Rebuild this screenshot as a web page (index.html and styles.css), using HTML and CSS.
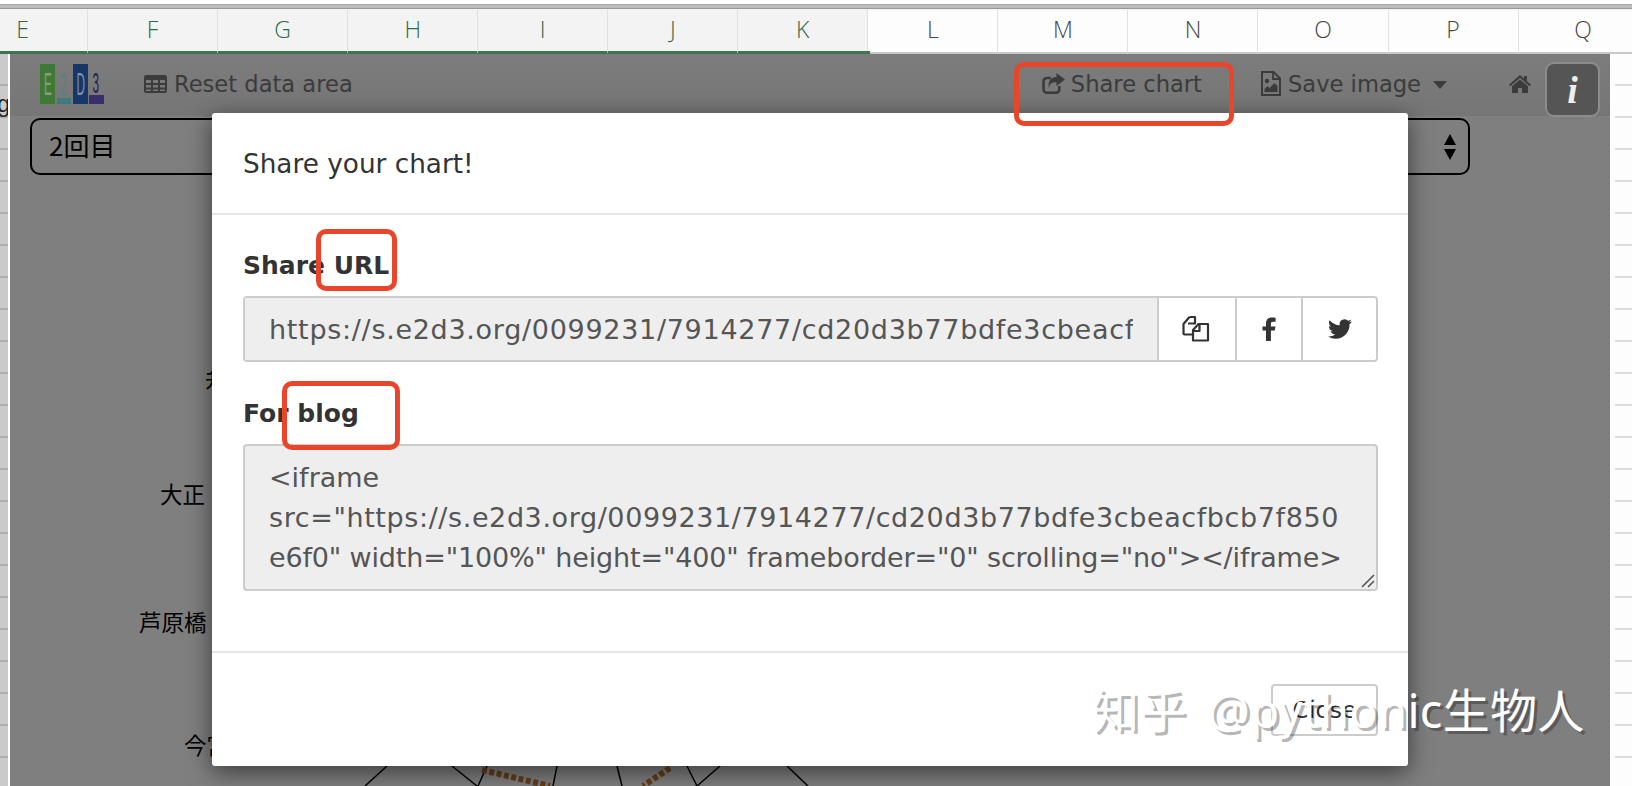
FILE: index.html
```html
<!DOCTYPE html>
<html lang="ja">
<head>
<meta charset="utf-8">
<title>E2D3 Share chart</title>
<link rel="stylesheet" href="styles.css">
</head>
<body>
<div class="page">
  <div class="window-edge"></div>
  <div class="colhead">
    <div class="col col-first active">E</div>
    <div class="col active">F</div>
    <div class="col active">G</div>
    <div class="col active">H</div>
    <div class="col active">I</div>
    <div class="col active">J</div>
    <div class="col active col-last-active">K</div>
    <div class="col">L</div>
    <div class="col">M</div>
    <div class="col">N</div>
    <div class="col">O</div>
    <div class="col">P</div>
    <div class="col">Q</div>
  </div>
  <div class="workspace">
    <div class="gutter-left"><span class="cut-g">g</span></div>
    <div class="gutter-gap"></div>
    <div class="app">
      <nav class="navbar">
        <svg class="logo" viewBox="0 0 64 40" width="64" height="40" role="img" aria-label="E2D3">
          <rect x="0" y="0" width="15" height="40" fill="#3f7a34"/>
          <rect x="17" y="34" width="14" height="6" fill="#3f7a7c"/>
          <rect x="33" y="0" width="15" height="40" fill="#16376a"/>
          <rect x="49" y="31" width="15" height="9" fill="#3a2d6b"/>
          <g font-family="Liberation Sans, sans-serif" font-size="31">
            <text transform="translate(4 31) scale(.38 1)" fill="#8a9a85">E</text>
            <text transform="translate(20 31) scale(.38 1)" fill="#4f8482">2</text>
            <text transform="translate(36.500 31) scale(.38 1)" fill="#7f8fa8">D</text>
            <text transform="translate(52.500 29) scale(.38 .93)" fill="#2a2050">3</text>
          </g>
        </svg>
        <a class="nav-item nav-reset">
          <svg class="ico" viewBox="0 0 23 18" width="23" height="18"><path fill="#777" fill-rule="evenodd" d="M2 0h19a2 2 0 0 1 2 2v14a2 2 0 0 1-2 2H2a2 2 0 0 1-2-2V2a2 2 0 0 1 2-2zM2 5v3h5V5zm7 0v3h5V5zm7 0v3h5V5zM2 10v2.500h5V10zm7 0v2.500h5V10zm7 0v2.500h5V10zM2 14.500V16h5v-1.500zm7 0V16h5v-1.500zm7 0V16h5v-1.500z"/></svg>
          Reset data area
        </a>
        <div class="nav-spacer"></div>
        <a class="nav-item nav-share">
          <svg class="ico" viewBox="0 0 23 21" width="23" height="21"><path fill="none" stroke="#777" stroke-width="2.600" d="M9 5H5a3.500 3.500 0 0 0-3.500 3.500v8A3.300 3.300 0 0 0 5 19.700h9a3.300 3.300 0 0 0 3.300-3.300v-3.400"/><path fill="#777" d="M14.500 0 23 6.500 14.500 13V9.300C10 9.300 7.500 10.500 7 15 5.500 9.500 8 4.200 14.500 4z"/></svg>
          Share chart
        </a>
        <a class="nav-item nav-save">
          <svg class="ico" viewBox="0 0 20 25" width="20" height="25"><path fill="none" stroke="#777" stroke-width="2" d="M1 1h11.500L19 7.500V24H1z"/><path fill="none" stroke="#777" stroke-width="1.800" d="M12 1v7h7"/><circle cx="6" cy="10" r="2.200" fill="#777"/><path fill="#777" d="M3.500 21v-3l3-3 2 2 5-5 3 3v6z"/></svg>
          Save image
          <span class="caret"></span>
        </a>
        <a class="nav-item nav-home">
          <svg viewBox="0 0 22 18" width="22" height="18"><path fill="#777" d="M11 0 15 3.500V1h3v5.200L22 9.700l-1.300 1.500L11 3 1.300 11.200 0 9.700z"/><path fill="#777" d="M11 4.500 19 11.200V18h-6v-5H9v5H3v-6.800z"/></svg>
        </a>
      </nav>
      <div class="select-row">
        <div class="fake-select">
          <span class="select-value">2回目</span>
          <span class="updown"></span>
        </div>
      </div>
      <div class="chart">
        <span class="station st-1">弁天町</span>
        <span class="station st-2">大正</span>
        <span class="station st-3">芦原橋</span>
        <span class="station st-4">今宮</span>
        <svg class="chart-lines" viewBox="0 0 1600 786" width="1600" height="786">
          <g transform="translate(-10 0)" fill="none">
            <g stroke="#000" stroke-width="1.500">
              <path d="M387 766 365 786M452 766 477 786M487 766 478 786M557 766 553 786M617 766 622 786M687 766 697 786M720 766 697 786M787 766 808 786"/>
            </g>
            <g stroke="#c87a30" stroke-width="6" stroke-dasharray="5 2.500">
              <path d="M482 770 550 786M670 768 643 786"/>
            </g>
          </g>
        </svg>
      </div>
      <div class="backdrop"></div>
      <a class="info-btn">i</a>
    </div>
    <div class="gutter-right"></div>
  </div>

  <section class="modal">
    <header class="modal-header">Share your chart!</header>
    <div class="modal-body">
      <h4 class="field-label">Share URL</h4>
      <div class="input-group">
        <div class="url-field"><div class="url-clip">https://s.e2d3.org/0099231/7914277/cd20d3b77bdfe3cbeacfbcb7f850e6f0</div></div>
        <a class="addon addon-copy">
          <svg viewBox="0 0 28 28" width="28" height="28"><path fill="none" stroke="#333" stroke-width="2.200" stroke-linejoin="round" d="M7.500 2H13v6.500H6M7.500 2 1.500 9v9.500a1 1 0 0 0 1 1H10"/><path fill="#fff" stroke="#333" stroke-width="2.200" stroke-linejoin="round" d="M16.500 9H26v16.500H11V15z"/><path fill="none" stroke="#333" stroke-width="2.200" stroke-linejoin="round" d="M17.500 9.500V16H11.500"/></svg>
        </a>
        <a class="addon addon-fb">
          <svg viewBox="0 0 15 24" width="15" height="24"><path fill="#333" d="M4 24V13.500H.5v-4H4V6.500C4 2.500 6.400.5 9.700.5c1.700 0 3.200.1 3.900.2v4h-2.400c-1.900 0-2.300.9-2.300 2.200v2.600h4.500l-.6 4H8.900V24z"/></svg>
        </a>
        <a class="addon addon-tw">
          <svg viewBox="0 0 24 24" width="24" height="24"><path fill="#333" d="M23.953 4.570a10 10 0 01-2.825.775 4.958 4.958 0 002.163-2.723c-.951.555-2.005.959-3.127 1.184a4.920 4.920 0 00-8.384 4.482C7.690 8.095 4.067 6.130 1.640 3.162a4.822 4.822 0 00-.666 2.475c0 1.710.870 3.213 2.188 4.096a4.904 4.904 0 01-2.228-.616v.060a4.923 4.923 0 003.946 4.827 4.996 4.996 0 01-2.212.085 4.936 4.936 0 004.604 3.417 9.867 9.867 0 01-6.102 2.105c-.390 0-.779-.023-1.170-.067a13.995 13.995 0 007.557 2.209c9.053 0 13.998-7.496 13.998-13.985 0-.210 0-.420-.015-.630A9.935 9.935 0 0024 4.590z"/></svg>
        </a>
      </div>
      <h4 class="field-label label-blog">For blog</h4>
      <div class="embed">
        <div class="embed-line">&lt;iframe</div>
        <div class="embed-line line-digits">src="https://s.e2d3.org/0099231/7914277/cd20d3b77bdfe3cbeacfbcb7f850</div>
        <div class="embed-line line-attrs">e6f0" width="100%" height="400" frameborder="0" scrolling="no"&gt;&lt;/iframe&gt;</div>
        <svg class="grip" viewBox="0 0 14 14" width="14" height="14"><path stroke="#555" stroke-width="1.600" fill="none" d="M1 13 13 1M7 13 13 7"/></svg>
      </div>
    </div>
    <footer class="modal-footer">
      <a class="btn-close">Close</a>
    </footer>
  </section>

  <div class="mark mark-share"></div>
  <div class="mark mark-url"></div>
  <div class="mark mark-blog"></div>
  <div class="watermark"><span class="wm-zh">知乎</span>@pythonic生物人</div>
</div>
</body>
</html>
```
FILE: styles.css
```css
* { box-sizing: border-box; }
html, body { margin: 0; padding: 0; }
body { background: #fff; font-family: "DejaVu Sans", sans-serif; }
.page { position: relative; width: 1632px; height: 786px; overflow: hidden; display: flex; flex-direction: column; }

.window-edge { height: 10px; flex: none; background: linear-gradient(#fff 0 4px, #a9a9a9 4px 5px, #bdbdbd 5px 8px, #9a9a9a 8px 9px, #f0f0f0 9px); }

.colhead { display: flex; height: 44px; flex: none; font-family: "Open Sans", sans-serif; font-weight: 300; font-size: 23px; overflow: hidden; }
.col { position: relative; flex: 0 0 130.050px; height: 44px; display: flex; align-items: center; justify-content: center; padding-bottom: 4px; color: #444; background: #fdfdfd; border-right: 1px solid #e2e2e2; border-bottom: 2px solid #c8c8c8; }
.col.active { color: #2c6a44; background: #f3f3f3; border-right-color: #dfdfdf; border-bottom: 3px solid #3f7350; }
.col-first { margin-left: -42px; }
.col-last-active { z-index: 1; }
.col-last-active::after { content: ""; position: absolute; left: 100%; bottom: -3px; width: 3px; height: 3px; background: #3f7350; }

.workspace { flex: 1; display: flex; min-height: 0; }
.gutter-left { position: relative; width: 8px; overflow: hidden; background: repeating-linear-gradient(#cacaca 0 30px, #aeaeae 30px 32px); }
.cut-g { position: absolute; left: -3px; top: 36px; font: 24px "Liberation Sans", sans-serif; color: #222; }
.gutter-gap { width: 2px; background: #fff; }
.gutter-right { flex: 1; background: repeating-linear-gradient(#fdfdfd 0 30px, #dcdcdc 30px 32px); border-left: 5px solid #fdfdfd; }

.app { position: relative; width: 1600px; background: #fff; }
.backdrop { position: absolute; inset: 0; background: rgba(0, 0, 0, .5); }

.navbar { height: 62px; display: flex; align-items: center; padding: 0 0 0 30px; background: linear-gradient(#f9f9f9, #ececec); color: #777; font-size: 22.600px; }
.logo { position: relative; z-index: 2; flex: none; margin-right: 40px; margin-top: -2px; }
.nav-item { display: flex; align-items: center; gap: 7px; margin-top: -3px; }
.nav-spacer { flex: 1; }
.nav-share { gap: 6px; }
.nav-save { margin-left: 59px; gap: 7px; }
.nav-home { margin-left: 62px; margin-right: 79px; }
.caret { width: 0; height: 0; margin-left: 5px; margin-top: 3px; border-left: 7.500px solid transparent; border-right: 7.500px solid transparent; border-top: 8px solid #777; }

.select-row { padding: 2px 140px 0 20px; }
.fake-select { display: flex; align-items: center; justify-content: space-between; height: 57px; padding: 0 11px 0 17px; border: 2px solid #000; border-radius: 10px; font-family: "Noto Sans CJK JP", sans-serif; font-size: 26px; color: #000; background: #fff; }
.select-value { margin-top: -4px; }
.updown { position: relative; width: 13px; height: 26px; }
.updown::before, .updown::after { content: ""; position: absolute; left: 0; border-left: 6.500px solid transparent; border-right: 6.500px solid transparent; }
.updown::before { top: 0; border-bottom: 11px solid #000; }
.updown::after { bottom: 0; border-top: 11px solid #000; }

.chart { position: absolute; inset: 0; }
.chart-lines { position: absolute; left: 0; top: -54px; }
.station { position: absolute; font-family: "Noto Sans CJK JP", sans-serif; font-size: 22.500px; line-height: 30px; color: #000; white-space: nowrap; }
.st-1 { left: 195px; top: 308px; }
.st-2 { left: 150px; top: 424px; }
.st-3 { left: 129px; top: 552px; }
.st-4 { left: 174px; top: 675px; }

.info-btn { position: absolute; z-index: 2; left: 1535px; top: 8px; width: 55px; height: 55px; display: flex; align-items: center; justify-content: center; background: #555; border: 2px solid #8c8c8c; border-radius: 9px; color: #eee; font: italic bold 38px "Liberation Serif", serif; }

.modal { position: absolute; left: 212px; top: 113px; width: 1196px; height: 653px; display: flex; flex-direction: column; background: #fff; border-radius: 3px; box-shadow: 0 6px 24px rgba(0, 0, 0, .55); color: #333; }
.modal-header { flex: none; height: 102px; padding: 33px 31px 0; border-bottom: 2px solid #e5e5e5; font-size: 26.300px; line-height: 36px; }
.modal-body { flex: none; height: 436px; padding: 37px 30px 0 31px; }
.field-label { margin: 0 0 16px; font-size: 25px; line-height: 28px; font-weight: 700; }
.label-blog { margin: 38px 0 16px; }
.input-group { display: flex; height: 66px; border: 2px solid #ccc; border-radius: 4px; }
.url-field { flex: 1; min-width: 0; padding: 0 24px; background: #eee; color: #555; font-size: 27px; line-height: 63px; letter-spacing: .700px; }
.url-clip { overflow: hidden; white-space: nowrap; }
.addon { flex: none; display: flex; align-items: center; justify-content: center; height: 100%; border-left: 2px solid #ccc; }
.addon-copy { width: 78px; }
.addon-copy svg { margin-right: 3px; }
.addon-fb { width: 66px; }
.addon-tw { width: 75px; }

.embed { position: relative; height: 147px; padding: 12px 24px; border: 2px solid #ccc; border-radius: 4px; background: #eee; color: #555; font-size: 27px; line-height: 40px; overflow: hidden; }
.embed-line { white-space: pre; }
.line-digits { letter-spacing: .600px; }
.line-attrs { letter-spacing: -.150px; }
.grip { position: absolute; right: 1px; bottom: 1px; }

.modal-footer { flex: 1; display: flex; justify-content: flex-end; align-items: flex-start; padding: 31px 30px 0 0; border-top: 2px solid #e5e5e5; }
.btn-close { width: 107px; height: 52px; display: flex; align-items: center; justify-content: center; border: 2px solid #ccc; border-radius: 4px; font-size: 23.500px; color: #333; }

.mark { position: absolute; border: 5px solid #e8452a; border-radius: 10px; }
.mark-share { left: 1014px; top: 62px; width: 220px; height: 64px; }
.mark-url { left: 316px; top: 229px; width: 81px; height: 62px; }
.mark-blog { left: 282px; top: 381px; width: 118px; height: 69px; }

.watermark { position: absolute; left: 1092px; top: 676px; display: flex; font-family: "Noto Sans", "Noto Sans CJK SC", sans-serif; font-size: 47px; line-height: 68px; letter-spacing: .3px; color: #fff; white-space: nowrap; text-shadow: 3px 3px 0 rgba(0, 0, 0, .3); }
.wm-zh { margin-right: 21px; }
```
